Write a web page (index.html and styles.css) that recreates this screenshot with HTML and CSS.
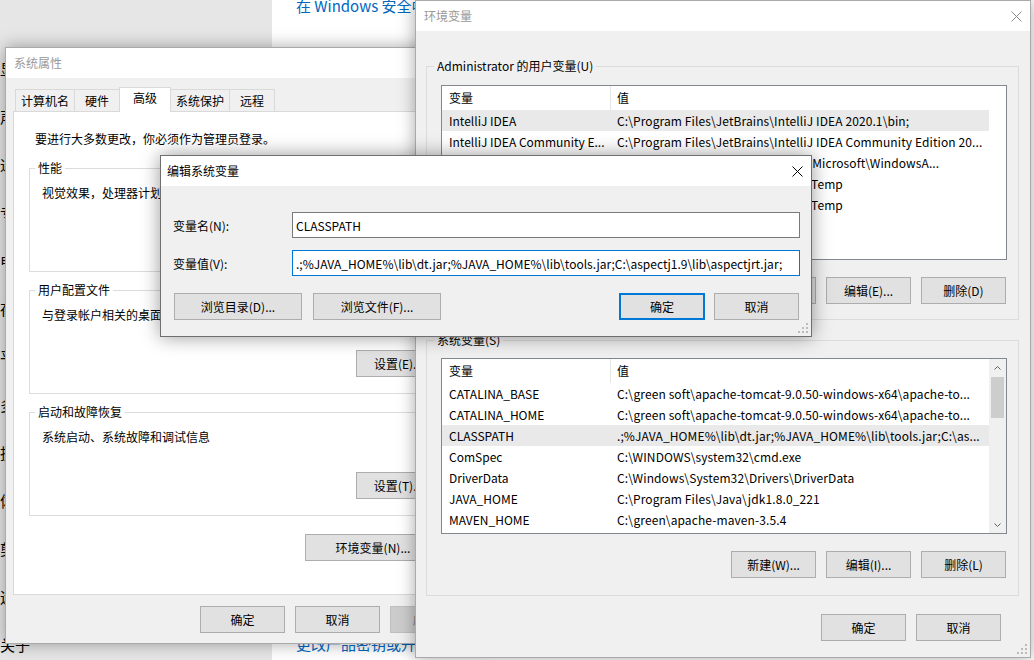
FILE: index.html
```html
<!DOCTYPE html>
<html>
<head>
  <meta charset="utf-8">
  <title>环境变量</title>
  <link rel="stylesheet" href="styles.css">
</head>
<body>
  <div class="desktop">

    <!-- Settings app behind the dialogs -->
    <div class="settings">
      <ul class="settings-nav">
        <li>显示</li>
        <li>声音</li>
        <li>通知和操作</li>
        <li>专注助手</li>
        <li>电源和睡眠</li>
        <li>存储</li>
        <li>平板电脑</li>
        <li>多任务处理</li>
        <li>投影到此电脑</li>
        <li>体验共享</li>
        <li>剪贴板</li>
        <li>远程桌面</li>
        <li>关于</li>
      </ul>
      <div class="settings-main">
        <a class="link link-top">在 Windows 安全中心中查看详细信息</a>
        <a class="link link-bottom">更改产品密钥或升级 Windows</a>
      </div>
    </div>

    <!-- 系统属性 -->
    <div class="window sysprops">
      <div class="titlebar">
        <span class="title">系统属性</span>
      </div>
      <div class="body">
        <div class="tabs">
          <div class="tab">计算机名</div>
          <div class="tab tab-short">硬件</div>
          <div class="tab tab-active">高级</div>
          <div class="tab">系统保护</div>
          <div class="tab tab-short">远程</div>
        </div>
        <div class="panel">
          <div class="note">要进行大多数更改，你必须作为管理员登录。</div>

          <div class="group">
            <div class="group-title">性能</div>
            <div class="group-text">视觉效果，处理器计划，内存使用，以及虚拟内存</div>
            <div class="group-actions"><button class="btn">设置(S)...</button></div>
          </div>

          <div class="group">
            <div class="group-title">用户配置文件</div>
            <div class="group-text">与登录帐户相关的桌面设置</div>
            <div class="group-actions"><button class="btn">设置(E)...</button></div>
          </div>

          <div class="group">
            <div class="group-title">启动和故障恢复</div>
            <div class="group-text">系统启动、系统故障和调试信息</div>
            <div class="group-actions"><button class="btn">设置(T)...</button></div>
          </div>

          <div class="panel-actions"><button class="btn btn-wide">环境变量(N)...</button></div>
        </div>
        <div class="dialog-actions">
          <button class="btn">确定</button>
          <button class="btn">取消</button>
          <button class="btn btn-disabled">应用(A)</button>
        </div>
      </div>
    </div>

    <!-- 环境变量 -->
    <div class="window envvars">
      <div class="titlebar">
        <span class="title">环境变量</span>
        <span class="close">
          <svg width="11" height="11" viewBox="0 0 11 11"><path d="M0.5 0.5L10.5 10.5M10.5 0.5L0.5 10.5" stroke="#8c8c8c" stroke-width="1"/></svg>
        </span>
      </div>
      <div class="body">
        <div class="group env-group">
          <div class="group-title">Administrator 的用户变量(U)</div>
          <div class="list">
            <div class="list-body">
              <div class="list-head">
                <div class="cell-name">变量</div>
                <div class="cell-value">值</div>
              </div>
              <div class="row selected"><div class="cell-name">IntelliJ IDEA</div><div class="cell-value">C:\Program Files\JetBrains\IntelliJ IDEA 2020.1\bin;</div></div>
              <div class="row"><div class="cell-name">IntelliJ IDEA Community E...</div><div class="cell-value">C:\Program Files\JetBrains\IntelliJ IDEA Community Edition 20...</div></div>
              <div class="row"><div class="cell-name">Path</div><div class="cell-value">%USERPROFILE%\AppData\Local\Microsoft\WindowsA...</div></div>
              <div class="row"><div class="cell-name">TEMP</div><div class="cell-value">%USERPROFILE%\AppData\Local\Temp</div></div>
              <div class="row"><div class="cell-name">TMP</div><div class="cell-value">%USERPROFILE%\AppData\Local\Temp</div></div>
            </div>
            <div class="list-gutter"></div>
          </div>
          <div class="list-actions">
            <button class="btn">新建(N)...</button>
            <button class="btn">编辑(E)...</button>
            <button class="btn">删除(D)</button>
          </div>
        </div>

        <div class="group env-group env-group-sys">
          <div class="group-title">系统变量(S)</div>
          <div class="list list-sys">
            <div class="list-body">
              <div class="list-head">
                <div class="cell-name">变量</div>
                <div class="cell-value">值</div>
              </div>
              <div class="row"><div class="cell-name">CATALINA_BASE</div><div class="cell-value">C:\green soft\apache-tomcat-9.0.50-windows-x64\apache-to...</div></div>
              <div class="row"><div class="cell-name">CATALINA_HOME</div><div class="cell-value">C:\green soft\apache-tomcat-9.0.50-windows-x64\apache-to...</div></div>
              <div class="row selected"><div class="cell-name">CLASSPATH</div><div class="cell-value">.;%JAVA_HOME%\lib\dt.jar;%JAVA_HOME%\lib\tools.jar;C:\as...</div></div>
              <div class="row"><div class="cell-name">ComSpec</div><div class="cell-value">C:\WINDOWS\system32\cmd.exe</div></div>
              <div class="row"><div class="cell-name">DriverData</div><div class="cell-value">C:\Windows\System32\Drivers\DriverData</div></div>
              <div class="row"><div class="cell-name">JAVA_HOME</div><div class="cell-value">C:\Program Files\Java\jdk1.8.0_221</div></div>
              <div class="row"><div class="cell-name">MAVEN_HOME</div><div class="cell-value">C:\green\apache-maven-3.5.4</div></div>
            </div>
            <div class="scrollbar">
              <div class="sb-arrow">
                <svg width="7" height="4" viewBox="0 0 7 4"><path d="M0.5 3.5L3.5 0.5L6.5 3.5" fill="none" stroke="#606060"/></svg>
              </div>
              <div class="sb-thumb"></div>
              <div class="sb-track"></div>
              <div class="sb-arrow">
                <svg width="7" height="4" viewBox="0 0 7 4"><path d="M0.5 0.5L3.5 3.5L6.5 0.5" fill="none" stroke="#606060"/></svg>
              </div>
            </div>
          </div>
          <div class="list-actions">
            <button class="btn">新建(W)...</button>
            <button class="btn">编辑(I)...</button>
            <button class="btn">删除(L)</button>
          </div>
        </div>

        <div class="dialog-actions env-actions">
          <button class="btn">确定</button>
          <button class="btn">取消</button>
        </div>
      </div>
      <svg class="grip" width="11" height="11" viewBox="0 0 11 11">
        <rect x="8" y="0" width="2" height="2"/><rect x="8" y="4" width="2" height="2"/><rect x="4" y="4" width="2" height="2"/>
        <rect x="8" y="8" width="2" height="2"/><rect x="4" y="8" width="2" height="2"/><rect x="0" y="8" width="2" height="2"/>
      </svg>
    </div>

    <!-- 编辑系统变量 -->
    <div class="window editvar">
      <div class="titlebar">
        <span class="title">编辑系统变量</span>
        <span class="close">
          <svg width="11" height="11" viewBox="0 0 11 11"><path d="M0.5 0.5L10.5 10.5M10.5 0.5L0.5 10.5" stroke="#000" stroke-width="1"/></svg>
        </span>
      </div>
      <div class="body">
        <div class="field">
          <label class="field-label">变量名(N):</label>
          <input class="field-input" type="text" value="CLASSPATH" readonly>
        </div>
        <div class="field">
          <label class="field-label">变量值(V):</label>
          <input class="field-input focused" type="text" value=".;%JAVA_HOME%\lib\dt.jar;%JAVA_HOME%\lib\tools.jar;C:\aspectj1.9\lib\aspectjrt.jar;" readonly>
        </div>
        <div class="edit-actions">
          <button class="btn btn-browse">浏览目录(D)...</button>
          <button class="btn btn-browse">浏览文件(F)...</button>
          <span class="spacer"></span>
          <button class="btn btn-default">确定</button>
          <button class="btn">取消</button>
        </div>
      </div>
      <svg class="grip" width="11" height="11" viewBox="0 0 11 11">
        <rect x="8" y="0" width="2" height="2"/><rect x="8" y="4" width="2" height="2"/><rect x="4" y="4" width="2" height="2"/>
        <rect x="8" y="8" width="2" height="2"/><rect x="4" y="8" width="2" height="2"/><rect x="0" y="8" width="2" height="2"/>
      </svg>
    </div>

  </div>
</body>
</html>
```

FILE: styles.css
```css
* {
  box-sizing: border-box;
}

body {
  margin: 0;
  font-family: "Noto Sans CJK SC", sans-serif;
  font-size: 12px;
  color: #000;
}

.desktop {
  position: relative;
  width: 1034px;
  height: 660px;
  overflow: hidden;
}

/* settings app in the background */
.settings {
  display: flex;
  height: 100%;
}

.settings-nav {
  width: 272px;
  margin: 0;
  padding: 45px 0 0 0;
  list-style: none;
  background: #e6e6e6;
  font-size: 15px;
}

.settings-nav li {
  height: 48px;
  line-height: 48px;
  white-space: nowrap;
}

.settings-main {
  flex: 1;
  display: flex;
  flex-direction: column;
  justify-content: space-between;
  padding-left: 24px;
  background: #fff;
}

.link {
  color: #0067c0;
  font-size: 15px;
  line-height: 20px;
  white-space: nowrap;
}

.link-top {
  margin-top: -4px;
}

.link-bottom {
  margin-bottom: 6px;
}

/* windows */
.window {
  position: absolute;
  display: flex;
  flex-direction: column;
  background: #f0f0f0;
  border: 1px solid #aaaaaa;
  box-shadow: 0 0 16px rgba(0,0,0,0.35);
}

.titlebar {
  flex-shrink: 0;
  height: 30px;
  display: flex;
  align-items: center;
  justify-content: space-between;
  padding-left: 8px;
  background: #fff;
}

.title {
  color: #999;
  line-height: 16px;
}

.close {
  width: 28px;
  height: 30px;
  display: flex;
  align-items: center;
  justify-content: center;
}

.grip {
  position: absolute;
  right: 2px;
  bottom: 2px;
  fill: #bcbcbc;
}

.btn {
  height: 27px;
  width: 85px;
  padding: 0;
  border: 1px solid #adadad;
  background: #e1e1e1;
  font: inherit;
  color: #000;
  line-height: 16px;
  white-space: nowrap;
}

.btn-wide {
  width: 136px;
}

.btn-disabled {
  background: #cccccc;
  border-color: #bfbfbf;
  color: #838383;
}

/* 系统属性 */
.sysprops {
  left: 5px;
  top: 47px;
  width: 481px;
  height: 597px;
  z-index: 1;
}

.sysprops .body {
  padding: 9px 7px 0 7px;
}

.tabs {
  height: 24px;
  display: flex;
  align-items: flex-end;
  padding-left: 2px;
}

.tab {
  height: 22px;
  padding: 0 5px;
  border: 1px solid #d9d9d9;
  border-bottom: none;
  background: #f0f0f0;
  line-height: 21px;
  white-space: nowrap;
}

.tab + .tab {
  margin-left: -1px;
}

.tab-short {
  padding: 0 10px;
}

.tab-active {
  position: relative;
  z-index: 1;
  height: 25px;
  margin-bottom: -1px;
  padding: 0 13px;
  background: #fff;
  line-height: 20px;
}

.panel {
  width: 465px;
  height: 484px;
  padding: 19px 0 0 15px;
  border: 1px solid #d9d9d9;
  background: #fff;
}

.note {
  margin-left: 6px;
  line-height: 16px;
}

.group {
  width: 440px;
  height: 104px;
  margin-top: 21px;
  padding: 0 27px 0 12px;
  border: 1px solid #dcdcdc;
}

.group + .group {
  margin-top: 18px;
}

.group-title {
  display: table;
  margin: -9px 0 0 -7px;
  padding: 0 3px;
  background: #fff;
  line-height: 16px;
  white-space: nowrap;
}

.group-text {
  margin-top: 9px;
  line-height: 16px;
  white-space: nowrap;
}

.group-actions {
  display: flex;
  justify-content: flex-end;
  margin-top: 27px;
}

.panel-actions {
  width: 440px;
  display: flex;
  justify-content: flex-end;
  margin-top: 18px;
  padding-right: 28px;
}

.dialog-actions {
  display: flex;
  justify-content: flex-end;
  gap: 10px;
  margin-top: 11px;
  padding-right: 3px;
}

/* 环境变量 */
.envvars {
  left: 415px;
  top: 0;
  width: 616px;
  height: 658px;
  z-index: 2;
}

.envvars .body {
  padding: 35px 11px 0 10px;
}

.env-group {
  width: auto;
  height: 254px;
  margin-top: 0;
  padding: 0 11px 0 14px;
}

.env-group .group-title {
  background: #f0f0f0;
}

.env-group + .env-group {
  margin-top: 20px;
}

.env-group-sys {
  height: 256px;
}

.list {
  display: flex;
  height: 175px;
  margin-top: 11px;
  border: 1px solid #828790;
  background: #fff;
}

.list-sys {
  height: 176px;
  margin-top: 10px;
}

.list-body {
  flex: 1;
  min-width: 0;
}

.list-gutter {
  width: 17px;
}

.list-head {
  display: flex;
  height: 24px;
  line-height: 24px;
}

.list-head .cell-name {
  width: 169px;
  border-right: 1px solid #e5e5e5;
}

.row {
  display: flex;
  height: 21px;
  line-height: 21px;
}

.row.selected {
  background: #e9e9e9;
}

.cell-name {
  width: 169px;
  flex-shrink: 0;
  padding: 0 4px 0 7px;
  white-space: nowrap;
  overflow: hidden;
  text-overflow: ellipsis;
}

.cell-value {
  flex: 1;
  min-width: 0;
  padding: 0 0 0 6px;
  letter-spacing: 0.1px;
  white-space: nowrap;
  overflow: hidden;
  text-overflow: ellipsis;
}

.scrollbar {
  width: 17px;
  display: flex;
  flex-direction: column;
  background: #f0f0f0;
}

.sb-arrow {
  height: 17px;
  display: flex;
  align-items: center;
  justify-content: center;
}

.sb-thumb {
  height: 41px;
  margin: 1px 2px 0 2px;
  background: #cdcdcd;
}

.sb-track {
  flex: 1;
}

.list-actions {
  display: flex;
  justify-content: flex-end;
  gap: 10px;
  margin-top: 17px;
  padding-right: 1px;
}

.env-actions {
  margin-top: 18px;
  padding-right: 18px;
}

/* 编辑系统变量 */
.editvar {
  left: 160px;
  top: 155px;
  width: 652px;
  height: 182px;
  z-index: 3;
  border-color: #6f6f6f;
  box-shadow: 0 0 18px rgba(0,0,0,0.4);
}

.editvar .titlebar {
  padding-left: 6px;
}

.editvar .title {
  color: #000;
}

.editvar .body {
  padding: 26px 11px 0 12px;
}

.field {
  display: flex;
  align-items: center;
}

.field + .field {
  margin-top: 12px;
}

.field-label {
  width: 119px;
}

.field-input {
  width: 508px;
  height: 26px;
  padding: 0 3px;
  border: 1px solid #7a7a7a;
  background: #fff;
  font: inherit;
  color: #000;
  outline: none;
}

.field-input.focused {
  border-color: #0078d7;
}

.edit-actions {
  display: flex;
  gap: 11px;
  margin-top: 17px;
  padding: 0 1px;
}

.btn-browse {
  width: 128px;
}

.spacer {
  flex: 1;
}

.btn-default {
  width: 86px;
  margin-right: -2px;
  border: 2px solid #0078d7;
}
```
